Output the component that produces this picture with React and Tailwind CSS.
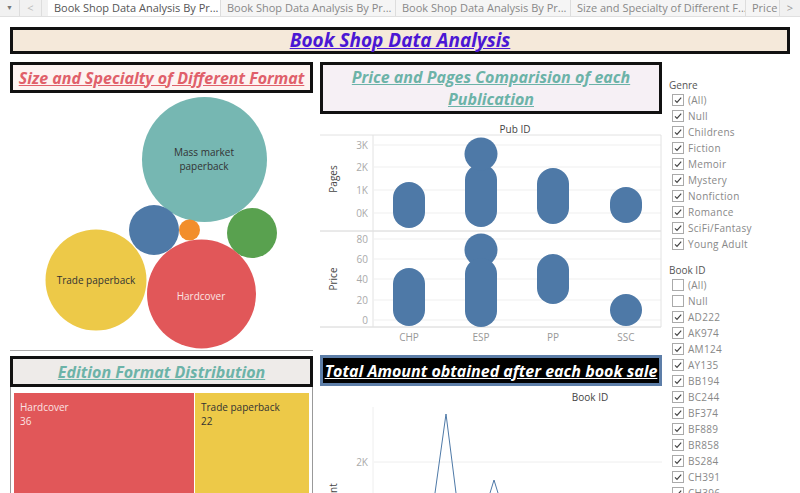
import React from "react";

const tabs = [
  { label: "Book Shop Data Analysis By Pr...", w: "w-[173px]", active: true },
  { label: "Book Shop Data Analysis By Pr...", w: "w-[175px]" },
  { label: "Book Shop Data Analysis By Pr...", w: "w-[175px]" },
  { label: "Size and Specialty of Different F...", w: "w-[175px]" },
  { label: "Price", w: "w-[34px]" },
];

const genres = [
  ["(All)", true],
  ["Null", true],
  ["Childrens", true],
  ["Fiction", true],
  ["Memoir", true],
  ["Mystery", true],
  ["Nonfiction", true],
  ["Romance", true],
  ["SciFi/Fantasy", true],
  ["Young Adult", true],
];

const bookIds = [
  ["(All)", false],
  ["Null", false],
  ["AD222", true],
  ["AK974", true],
  ["AM124", true],
  ["AY135", true],
  ["BB194", true],
  ["BC244", true],
  ["BF374", true],
  ["BF889", true],
  ["BR858", true],
  ["BS284", true],
  ["CH391", true],
  ["CH396", true],
];

const titleFont = "font-['Open_Sans',sans-serif] font-bold italic underline";

function Check({ label, checked }) {
  return (
    <div className="flex items-center h-[16px]">
      <div className="w-[12px] h-[12px] ml-[4px] mr-[4px] border border-[#aaa] bg-white flex items-center justify-center">
        {checked && (
          <svg width="10" height="10" viewBox="0 0 10 10">
            <path d="M2 5.4 L4 7.4 L8.2 2.6" fill="none" stroke="#444" strokeWidth="1.2" />
          </svg>
        )}
      </div>
      <span className="text-[10px] text-[#888] tracking-[0.3px]">{label}</span>
    </div>
  );
}

function Bubbles() {
  return (
    <svg width="303" height="257" className="block">
      <circle cx="194.5" cy="66.5" r="62.5" fill="#76b7b2" />
      <circle cx="144" cy="137" r="25" fill="#4e79a7" />
      <circle cx="179.5" cy="137" r="10.5" fill="#f28e2b" />
      <circle cx="242" cy="140" r="25" fill="#59a14f" />
      <circle cx="86" cy="187" r="50.5" fill="#edc948" />
      <circle cx="191.5" cy="201" r="54.5" fill="#e15759" />
      <g fontFamily="'Open Sans', sans-serif" fontSize="10" textAnchor="middle">
        <text x="194" y="63" fill="#333">Mass market</text>
        <text x="194" y="77" fill="#333">paperback</text>
        <text x="86" y="191" fill="#333">Trade paperback</text>
        <text x="191" y="207" fill="#fbe3e3">Hardcover</text>
      </g>
    </svg>
  );
}

function PubChart() {
  const blue = "#4e79a7";
  const cap = (cx, y1, y2, key) => (
    <rect key={key} x={cx - 16} y={y1} width="32" height={y2 - y1} rx="16" fill={blue} />
  );
  const pagesTicks = [["3K", 29], ["2K", 51], ["1K", 74], ["0K", 97]];
  const priceTicks = [["80", 123], ["60", 143], ["40", 163], ["20", 184], ["0", 204]];
  const cols = [["CHP", 89], ["ESP", 161], ["PP", 233], ["SSC", 306]];
  return (
    <svg width="342" height="234" className="block mt-[2px]">
      <g fontFamily="'Open Sans', sans-serif">
        <text x="195" y="17" fontSize="10" fill="#444" textAnchor="middle">Pub ID</text>
        {[...pagesTicks, ...priceTicks].map(([t, y]) => (
          <g key={t + y}>
            <line x1="54" x2="341" y1={y} y2={y} stroke="#efefef" />
            <text x="48" y={y + 3.5} fontSize="10" fill="#aaa" textAnchor="end">{t}</text>
          </g>
        ))}
        <line x1="0" x2="341" y1="19" y2="19" stroke="#e2e2e2" />
        <line x1="0" x2="341" y1="115" y2="115" stroke="#d4d4d4" />
        <line x1="0" x2="341" y1="211" y2="211" stroke="#d4d4d4" />
        <line x1="53" x2="53" y1="19" y2="211" stroke="#e2e2e2" />
        <line x1="341" x2="341" y1="19" y2="211" stroke="#e2e2e2" />
        <text transform="translate(17 63) rotate(-90)" fontSize="10" fill="#444" textAnchor="middle">Pages</text>
        <text transform="translate(17 163) rotate(-90)" fontSize="10" fill="#444" textAnchor="middle">Price</text>
        {cols.map(([t, x]) => (
          <text key={t} x={x} y="225" fontSize="10" fill="#999" textAnchor="middle">{t}</text>
        ))}
      </g>
      {cap(89, 66, 112, "a")}
      {cap(161, 48, 111, "b")}
      <circle cx="161" cy="38" r="16.5" fill={blue} />
      {cap(233, 52, 108, "c")}
      {cap(306, 71, 107, "d")}
      {cap(89, 152, 210, "e")}
      <circle cx="161" cy="134" r="16.5" fill={blue} />
      {cap(161, 142, 211, "f")}
      {cap(233, 138, 188, "g")}
      <circle cx="306" cy="194" r="16" fill={blue} />
    </svg>
  );
}

function AmountChart() {
  return (
    <svg width="342" height="107" className="block">
      <g fontFamily="'Open Sans', sans-serif">
        <text x="270" y="15" fontSize="10" fill="#444" textAnchor="middle">Book ID</text>
        <line x1="53" x2="53" y1="21" y2="107" stroke="#eee" />
        <line x1="54" x2="342" y1="76" y2="76" stroke="#eee" />
        <text x="48" y="80" fontSize="10" fill="#aaa" textAnchor="end">2K</text>
        <text transform="translate(17 116) rotate(-90)" fontSize="10" fill="#444" textAnchor="middle">Amount</text>
      </g>
      <polyline points="115,107 126,28 136,107" fill="none" stroke="#4e79a7" strokeWidth="1" />
      <polyline points="170,107 174,94 178,107" fill="none" stroke="#4e79a7" strokeWidth="1" />
    </svg>
  );
}

export default function App() {
  return (
    <div className="w-[800px] h-[493px] overflow-hidden bg-white font-['Open_Sans',sans-serif]">
      {/* Tab strip */}
      <div className="flex h-[17px] bg-[#f1f1f1] border-b border-[#e0e0e0] text-[11px] text-[#777] items-stretch">
        <div className="w-[20px] flex items-center justify-center text-[7px] text-[#777] border-r border-[#ddd]">▼</div>
        <div className="w-[22px] flex items-center justify-center text-[#bbb] border-r border-[#ddd]">&lt;</div>
        <div className="w-[6px]" />
        {tabs.map((t, i) => (
          <div
            key={i}
            className={`${t.w} flex items-center pl-[6px] whitespace-nowrap overflow-hidden border-r border-[#ddd] ${
              t.active ? "bg-white text-[#555]" : "bg-[#f5f5f5] text-[#888]"
            }`}
          >
            {t.label}
          </div>
        ))}
        <div className="flex-1 flex items-center justify-center text-[#999]">&gt;</div>
      </div>

      {/* Dashboard title */}
      <div className="mx-[10px] mt-[10px] h-[27px] border-[3px] border-[#111] bg-[#f5e9da] flex items-center justify-center">
        <span className={`${titleFont} text-[19px] text-[#4b17d4]`}>Book Shop Data Analysis</span>
      </div>

      <div className="flex mt-[8px]">
        {/* Left column */}
        <div className="ml-[10px] w-[303px] flex flex-col">
          <div className="h-[31px] border-[3px] border-[#111] bg-[#fdf3f1] flex items-center justify-center">
            <span className={`${titleFont} text-[16px] text-[#e0606a]`}>Size and Specialty of Different Format</span>
          </div>
          <div className="border-b border-[#aaa]">
            <Bubbles />
          </div>
          <div className="mt-[5px] h-[31px] border-[3px] border-[#111] bg-[#eeebe9] flex items-center justify-center">
            <span className={`${titleFont} text-[16px] text-[#6cb3a8]`}>Edition Format Distribution</span>
          </div>
          <div className="h-[110px] border border-t-0 border-[#999] flex pt-[6px] px-[3px]">
            <div className="w-[180px] bg-[#e15759] text-[10px] text-[#fbe3e3] px-[6px] pt-[7px] leading-[14px]">
              <div>Hardcover</div>
              <div>36</div>
            </div>
            <div className="ml-[1px] w-[114px] bg-[#edc948] text-[10px] text-[#333] px-[6px] pt-[7px] leading-[14px]">
              <div>Trade paperback</div>
              <div>22</div>
            </div>
          </div>
        </div>

        {/* Middle column */}
        <div className="ml-[7px] w-[342px] flex flex-col">
          <div className="h-[52px] border-[3px] border-[#111] bg-[#f6f0f5] flex flex-col items-center justify-center leading-[22px]">
            <span className={`${titleFont} text-[16px] text-[#6cb3a8]`}>Price and Pages Comparision of each</span>
            <span className={`${titleFont} text-[16px] text-[#6cb3a8]`}>Publication</span>
          </div>
          <PubChart />
          <div className="mt-[5px] h-[31px] border-[3px] border-[#5d7ea8] bg-black flex items-center justify-center">
            <span className={`${titleFont} text-[16px] text-white`}>Total Amount obtained after each book sale</span>
          </div>
          <AmountChart />
        </div>

        {/* Filters */}
        <div className="ml-[6px] flex-1 pt-[16px]">
          <div className="text-[10px] text-[#555] leading-[14px] ml-[1px]">Genre</div>
          {genres.map(([g, c]) => (
            <Check key={g} label={g} checked={c} />
          ))}
          <div className="mt-[11px] text-[10px] text-[#555] leading-[14px] ml-[1px]">Book ID</div>
          {bookIds.map(([b, c]) => (
            <Check key={b} label={b} checked={c} />
          ))}
        </div>
      </div>
    </div>
  );
}
